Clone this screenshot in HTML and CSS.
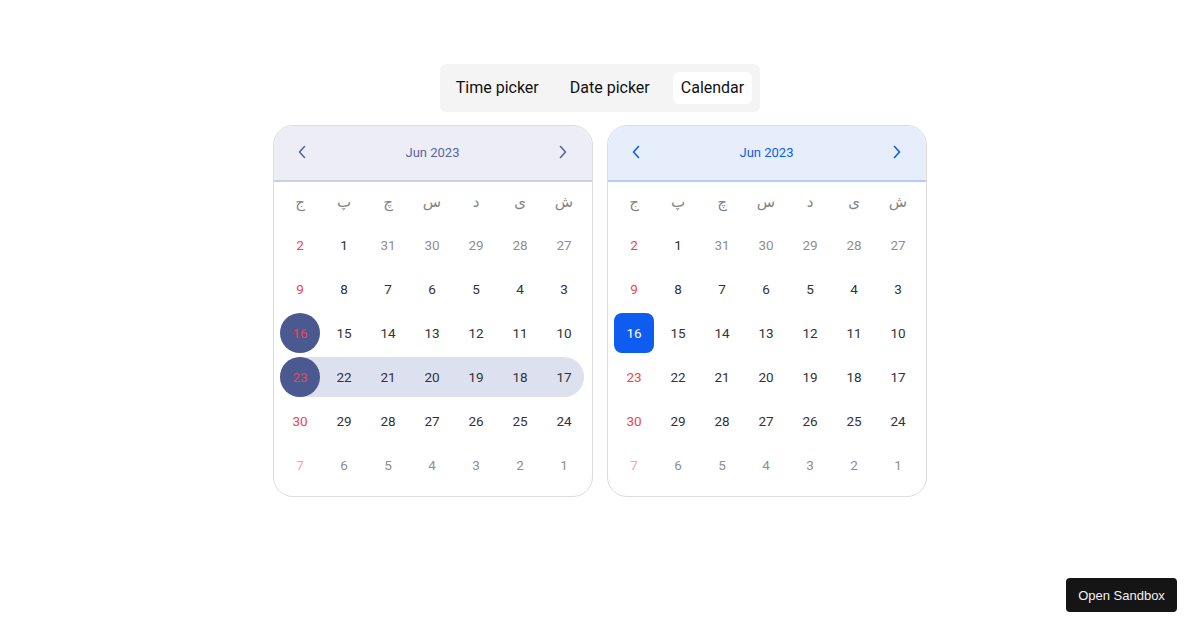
FILE: index.html
```html
<!DOCTYPE html>
<html lang="en">
<head>
    <meta charset="UTF-8">
    <meta name="viewport" content="width=device-width, initial-scale=1.0">
    <title>Calendar</title>
    <link rel="stylesheet" href="styles.css">
</head>
<body>
    <div class="page">
        <div class="tabs">
            <div class="tab">Time picker</div>
            <div class="tab">Date picker</div>
            <div class="tab active">Calendar</div>
        </div>
        <div class="calendars">
            <div class="cal range-cal" id="calA"></div>
            <div class="cal blue-cal" id="calB"></div>
        </div>
    </div>
    <button class="sandbox">Open Sandbox</button>

    <script>
        const weekdays = ["ش", "ی", "د", "س", "چ", "پ", "ج"];
        // [day, muted]
        const weeks = [
            [[27,1],[28,1],[29,1],[30,1],[31,1],[1,0],[2,0]],
            [[3,0],[4,0],[5,0],[6,0],[7,0],[8,0],[9,0]],
            [[10,0],[11,0],[12,0],[13,0],[14,0],[15,0],[16,0]],
            [[17,0],[18,0],[19,0],[20,0],[21,0],[22,0],[23,0]],
            [[24,0],[25,0],[26,0],[27,0],[28,0],[29,0],[30,0]],
            [[1,1],[2,1],[3,1],[4,1],[5,1],[6,1],[7,1]]
        ];
        const chevLeft = '<svg width="8" height="14" viewBox="0 0 8 14"><path d="M6.5 1.5L1.5 7l5 5.5" fill="none" stroke="currentColor" stroke-width="1.6" stroke-linecap="round" stroke-linejoin="round"/></svg>';
        const chevRight = '<svg width="8" height="14" viewBox="0 0 8 14"><path d="M1.5 1.5L6.5 7l-5 5.5" fill="none" stroke="currentColor" stroke-width="1.6" stroke-linecap="round" stroke-linejoin="round"/></svg>';

        function buildCalendar(el, mode) {
            let html = `<div class="cal-head"><span class="nav">${chevLeft}</span><span class="title">Jun 2023</span><span class="nav">${chevRight}</span></div>`;
            html += '<div class="cal-body"><div class="week weekdays">';
            weekdays.forEach(w => html += `<div class="cell">${w}</div>`);
            html += '</div>';
            weeks.forEach((week, wi) => {
                let rowClass = "week";
                if (mode === "range" && wi === 3) rowClass += " in-range";
                html += `<div class="${rowClass}">`;
                week.forEach((d, di) => {
                    let cls = "cell";
                    if (d[1]) cls += " muted";
                    if (di === 6) cls += " friday";
                    if (mode === "range" && di === 6 && (wi === 2 || wi === 3)) cls += " picked";
                    if (mode === "single" && di === 6 && wi === 2) cls += " picked";
                    html += `<div class="${cls}">${d[0]}</div>`;
                });
                html += '</div>';
            });
            html += '</div>';
            el.innerHTML = html;
        }

        buildCalendar(document.getElementById("calA"), "range");
        buildCalendar(document.getElementById("calB"), "single");
    </script>
</body>
</html>
```

FILE: styles.css
```css
body {
    margin: 0;
    background: #fff;
    font-family: Roboto, "Noto Sans", sans-serif;
    color: #222;
}
.page {
    display: flex;
    flex-direction: column;
    align-items: center;
    padding-top: 64px;
}
.tabs {
    display: flex;
    gap: 15px;
    padding: 8px;
    background: #f4f4f4;
    border-radius: 6px;
}
.tab {
    height: 32px;
    line-height: 32px;
    padding: 0 8px;
    font-size: 16px;
    color: #111;
    border-radius: 6px;
}
.tab.active {
    background: #fff;
}
.calendars {
    display: flex;
    gap: 14px;
    margin-top: 13px;
}
.cal {
    width: 318px;
    border: 1px solid #dcdcdc;
    border-radius: 20px;
    overflow: hidden;
}
.cal-head {
    height: 54px;
    display: flex;
    align-items: center;
    justify-content: space-between;
    padding: 0 9px 2px 8px;
    box-sizing: border-box;
    font-size: 13px;
}
.range-cal .cal-head {
    background: #edeef5;
    border-bottom: 2px solid #cbd1e5;
    color: #5566a6;
}
.blue-cal .cal-head {
    background: #e6eefc;
    border-bottom: 2px solid #b5cdf8;
    color: #0f5cf0;
}
.cal-head {
    height: 56px;
}
.nav {
    width: 40px;
    display: flex;
    justify-content: center;
    align-items: center;
}
.cal-body {
    padding: 1px 8px 11px 6px;
    display: flex;
    flex-direction: column;
    gap: 4px;
}
.week {
    display: flex;
    direction: rtl;
    gap: 4px;
    border-radius: 20px;
}
.weekdays {
    height: 42px;
    margin-bottom: -4px;
}
.weekdays .cell {
    height: 42px;
    color: #858585;
    font-family: "DejaVu Sans", sans-serif;
    font-size: 15px;
    padding-bottom: 4px;
    box-sizing: border-box;
}
.cell {
    width: 40px;
    height: 40px;
    display: flex;
    align-items: center;
    justify-content: center;
    font-size: 13.5px;
    color: #333;
}
.cell.muted {
    color: #8f8f8f;
}
.cell.friday {
    color: #f0444c;
}
.cell.friday.muted {
    color: #f5a3a6;
}
.in-range {
    background: #dde0ee;
}
.range-cal .picked {
    background: #4a5990;
    border-radius: 50%;
}
.blue-cal .picked {
    background: #0f5cf0;
    color: #fff;
    border-radius: 8px;
}
.sandbox {
    position: fixed;
    right: 23px;
    bottom: 18px;
    width: 111px;
    height: 34px;
    background: #151515;
    color: #f2f2f2;
    border: none;
    border-radius: 4px;
    font-family: "Liberation Sans", Arial, sans-serif;
    font-size: 13px;
}
```
